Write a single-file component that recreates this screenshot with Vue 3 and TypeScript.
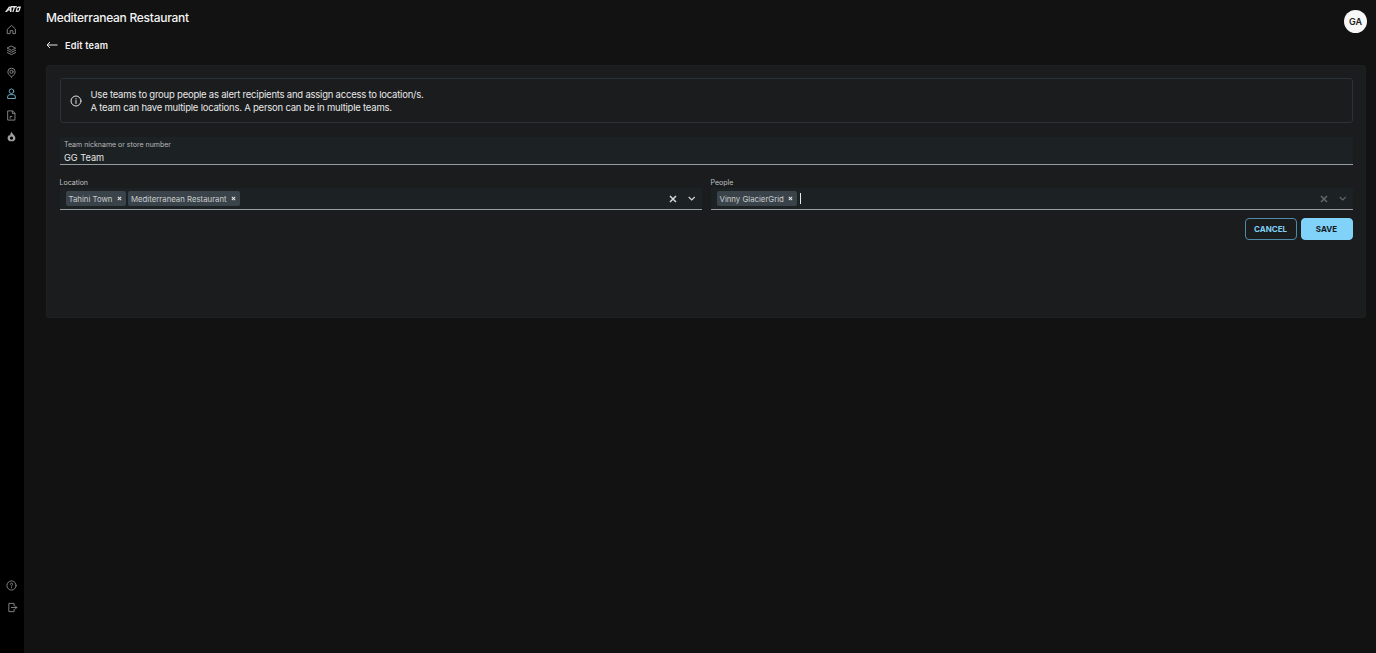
<script setup lang="ts">
const locations: string[] = ['Tahini Town', 'Mediterranean Restaurant']
const people: string[] = ['Vinny GlacierGrid']
</script>

<template>
  <div class="page">
    <aside class="rail">
      <svg class="logo" viewBox="0 0 16 6" width="16" height="6">
        <path d="M0 6 L4 0.500 H6.500 L6.500 6 H5 L5 4.500 H3 L2 6 Z M3.800 3.300 H5 V2 Z" fill="#e4e4e4" fill-rule="evenodd" />
        <path d="M6 0 H12 L11.500 1.500 H10 L8.500 6 H7.200 L8.700 1.500 H6Z" fill="#e4e4e4" />
        <path d="M11.500 2 Q12 0.500 13.500 0.500 H16 L15 4 Q14.500 6 13 6 H10.500 Z M12.800 2 L12 4.500 H13.500 L14.300 2 Z" fill="#e4e4e4" fill-rule="evenodd" />
      </svg>
      <nav class="nav-top">
        <svg class="ico" viewBox="0 0 24 24"><path d="M3.500 11 12 3 20.500 11V21H15V14.500H9V21H3.500Z" /></svg>
        <svg class="ico" viewBox="0 0 24 24"><path d="M12 2.500 21 7 12 11.500 3 7Z" /><path d="M3 11.500 12 16 21 11.500" /><path d="M3 16.500 12 21 21 16.500" /></svg>
        <svg class="ico" viewBox="0 0 24 24"><path d="M12 22C7.500 18.500 4 14.500 4 10.500A8 8 0 0 1 20 10.500C20 14.500 16.500 18.500 12 22Z" /><circle cx="12" cy="10.500" r="3.500" /></svg>
        <svg class="ico active" viewBox="0 0 24 24"><circle cx="12" cy="7" r="5" /><path d="M3.500 22V19.500A5 5 0 0 1 8.500 14.500H15.500A5 5 0 0 1 20.500 19.500V22Z" /></svg>
        <svg class="ico" viewBox="0 0 24 24"><path d="M4.500 2H14.500L19.500 7V22H4.500Z" /><path d="M14 2.500V7.500H19" /><path d="M9 18V14H13" /></svg>
        <svg class="ico" viewBox="0 0 24 24"><path class="solid" d="M12 1.500C13 5 15 6 17 8.500 19 10.500 20.500 12.500 20.500 15A8.500 7.500 0 0 1 3.500 15C3.500 12 5.500 10 7 8 7.500 9.500 8 10 9 10.500 9 7 10 4 12 1.500Z" /><circle class="hole" cx="12" cy="15.500" r="3.500" /></svg>
      </nav>
      <nav class="nav-bottom">
        <svg class="ico" viewBox="0 0 24 24"><circle cx="12" cy="12" r="10" /><path d="M9.500 9.500A2.500 2.500 0 0 1 14.500 9.500C14.500 11.500 12 11.500 12 13.500" /><path d="M12 16.500V17" /></svg>
        <svg class="ico big" viewBox="0 0 24 24"><path d="M15.500 8V3H4V21H15.500V16" /><path d="M9.500 12H21" /><path d="M18 8.500 21.500 12 18 15.500" /></svg>
      </nav>
    </aside>

    <main class="main">
      <header class="topbar">
        <h1 class="title">Mediterranean Restaurant</h1>
        <div class="avatar">GA</div>
      </header>

      <div class="crumb">
        <svg class="back" viewBox="0 0 12 8" width="12" height="8"><path d="M11.500 4H1M4 1 1 4 4 7" /></svg>
        <span>Edit team</span>
      </div>

      <section class="card">
        <div class="info">
          <svg class="info-ico" viewBox="0 0 24 24" width="12" height="12"><circle cx="12" cy="12" r="10" /><path d="M12 11V17" /><path d="M12 7V8" /></svg>
          <p class="info-text">
            Use teams to group people as alert recipients and assign access to location/s.<br />
            A team can have multiple locations. A person can be in multiple teams.
          </p>
        </div>

        <div class="text-field">
          <label class="float-label">Team nickname or store number</label>
          <div class="value">GG Team</div>
        </div>

        <div class="selects">
          <div class="select-col">
            <label class="label">Location</label>
            <div class="select">
              <span v-for="l in locations" :key="l" class="chip">{{ l }}<svg class="chip-x" viewBox="0 0 6 6" width="5" height="5"><path d="M1 1 5 5M5 1 1 5" /></svg></span>
              <span class="spacer"></span>
              <svg class="ctl" viewBox="0 0 10 10" width="10" height="10"><path d="M2 2 8 8M8 2 2 8" /></svg>
              <svg class="ctl chev" viewBox="0 0 10 6" width="7.500" height="5"><path d="M1 1 5 5 9 1" /></svg>
            </div>
          </div>
          <div class="select-col">
            <label class="label">People</label>
            <div class="select">
              <span v-for="p in people" :key="p" class="chip">{{ p }}<svg class="chip-x" viewBox="0 0 6 6" width="5" height="5"><path d="M1 1 5 5M5 1 1 5" /></svg></span>
              <span class="caret"></span>
              <span class="spacer"></span>
              <svg class="ctl dim" viewBox="0 0 10 10" width="10" height="10"><path d="M2 2 8 8M8 2 2 8" /></svg>
              <svg class="ctl chev dim" viewBox="0 0 10 6" width="7.500" height="5"><path d="M1 1 5 5 9 1" /></svg>
            </div>
          </div>
        </div>

        <div class="actions">
          <button class="btn cancel">CANCEL</button>
          <button class="btn save">SAVE</button>
        </div>
      </section>
    </main>
  </div>
</template>

<style>
html, body { margin: 0; background: #121212; }
</style>

<style scoped>
.page {
  display: flex;
  height: 653px;
  width: 1376px;
  overflow: hidden;
  background: #121212;
  color: #f2f2f2;
  font-family: Inter, "Noto Sans", sans-serif;
}
.rail {
  width: 24px;
  flex: none;
  background: #000;
  display: flex;
  flex-direction: column;
  align-items: center;
  padding: 6px 1px 0 0;
  box-sizing: border-box;
}
.logo { margin-left: 2px; }
.nav-top {
  display: flex;
  flex-direction: column;
  align-items: center;
  gap: 10.600px;
  margin-top: 11.500px;
}
.nav-bottom {
  display: flex;
  flex-direction: column;
  align-items: center;
  gap: 11.500px;
  margin-top: auto;
  padding-bottom: 40px;
}
.ico {
  width: 11px;
  height: 11px;
  fill: none;
  stroke: #8a8a8a;
  stroke-width: 2;
  stroke-linejoin: round;
  stroke-linecap: round;
}
.ico.active { stroke: #6fb6cf; }
.ico.big { margin-left: 1px; }
.ico .solid { fill: #a0a0a0; stroke: none; }
.ico .hole { fill: #000; stroke: none; }
.main {
  flex: 1;
  min-width: 0;
  padding: 0 10px 0 22px;
  box-sizing: border-box;
}
.topbar {
  display: flex;
  align-items: flex-start;
  justify-content: space-between;
  height: 38px;
}
.title {
  margin: 11px 0 0;
  font-size: 12px;
  line-height: 14px;
  font-weight: 500;
  letter-spacing: -0.27px;
  color: #f4f4f4;
}
.avatar {
  width: 23px;
  height: 23px;
  margin: 10px -1px 0 0;
  border-radius: 50%;
  background: #f7f7f7;
  color: #222;
  font-size: 9px;
  font-weight: 600;
  display: flex;
  align-items: center;
  justify-content: center;
}
.crumb {
  display: flex;
  align-items: center;
  height: 14px;
  font-size: 9.200px;
  font-weight: 600;
  letter-spacing: 0.2px;
  color: #f2f2f2;
  gap: 7px;
}
.back { fill: none; stroke: #e6e6e6; stroke-width: 1; }
.card {
  margin-top: 13px;
  height: 253px;
  box-sizing: border-box;
  background: #1a1c1e;
  border-radius: 3px;
  border: 1px solid #1e2123;
  padding: 12px 12.500px;
}
.info {
  height: 45px;
  box-sizing: border-box;
  border: 1px solid #2b3338;
  border-radius: 3px;
  display: flex;
  align-items: center;
  padding-left: 9.500px;
  gap: 8.500px;
}
.info-ico { fill: none; stroke: #e0e0e0; stroke-width: 2; stroke-linecap: round; flex: none; }
.info-text {
  margin: 0;
  font-size: 9.500px;
  line-height: 13px;
  letter-spacing: -0.22px;
  color: #e8e8e8;
}
.text-field {
  margin-top: 14px;
  height: 28px;
  box-sizing: border-box;
  background: #1c2124;
  border-bottom: 1px solid #9a9d9f;
  padding: 3px 4.500px 0;
}
.float-label {
  display: block;
  font-size: 7px;
  line-height: 9px;
  color: #b8babb;
}
.value {
  font-size: 9.200px;
  line-height: 12px;
  margin-top: 3px;
  color: #e6e6e6;
}
.selects {
  display: flex;
  gap: 9px;
  margin-top: 13px;
}
.select-col { flex: 1; min-width: 0; }
.label {
  display: block;
  font-size: 7px;
  line-height: 9px;
  color: #c0c2c3;
  margin-bottom: 1px;
}
.select {
  height: 22px;
  box-sizing: border-box;
  background: #1c2124;
  border-bottom: 1px solid #9a9d9f;
  display: flex;
  align-items: center;
  padding: 0 6px;
  gap: 2px;
}
.chip {
  display: inline-flex;
  align-items: center;
  height: 15px;
  padding: 0 3px;
  background: #3a4349;
  border-radius: 2px;
  font-size: 7.800px;
  color: #c9cccd;
  white-space: nowrap;
}
.chip-x {
  flex: none;
  fill: none;
  stroke: #e0e0e0;
  stroke-width: 1.300;
  margin-left: 4.500px;
  margin-right: 1px;
}
.caret {
  width: 1px;
  height: 11px;
  background: #e8e8e8;
  margin-left: 1px;
}
.spacer { flex: 1; }
.ctl { fill: none; stroke: #d8d8d8; stroke-width: 1.500; flex: none; margin-right: 4.500px; }
.ctl.chev { margin-left: 3.750px; margin-right: 0; }
.ctl.dim { stroke: #62686b; }
.actions {
  display: flex;
  justify-content: flex-end;
  gap: 4px;
  margin-top: 8px;
}
.btn {
  width: 52px;
  height: 22px;
  border-radius: 4px;
  font-family: inherit;
  font-size: 8px;
  font-weight: 700;
  padding: 0;
  box-sizing: border-box;
}
.cancel {
  background: transparent;
  border: 1px solid #4f8aa8;
  color: #7fd0f7;
}
.save {
  background: #80d2f8;
  border: 1px solid #80d2f8;
  color: #14181b;
}
</style>
